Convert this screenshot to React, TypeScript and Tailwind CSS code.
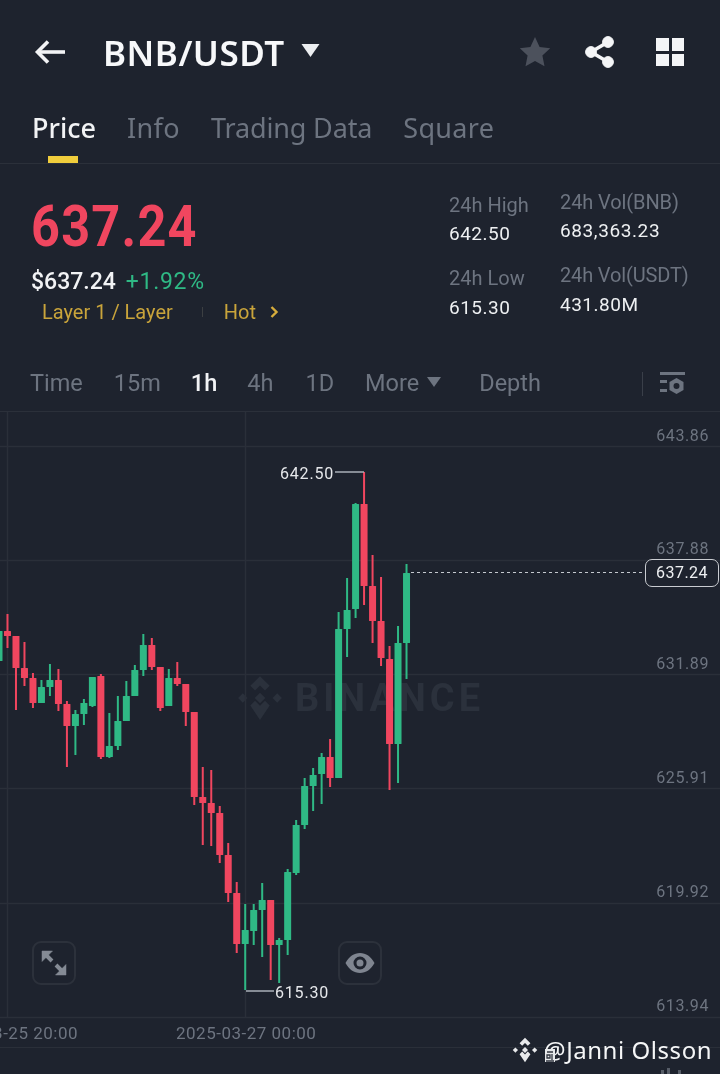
const UP = "#2fb985";
const DOWN = "#f0465f";
// x-index, colour, wick top, body top, body bottom, wick bottom
const C: [number, number, number, number, number, number][] = [
  [0,1,626,631,661,661],[1,0,614,631,636,648],[2,0,636,636,668,710],[3,0,642,668,678,686],[4,0,673,678,703,708],
  [5,1,680,687,703,703],[6,1,664,680,687,696],[7,0,669,680,704,711],[8,0,701,704,726,767],[9,1,710,714,726,755],
  [10,1,699,703,714,725],[11,1,677,677,706,707],[12,0,674,676,757,759],[13,1,713,746,757,758],[14,1,696,721,746,750],
  [15,1,681,696,721,721],[16,1,665,670,696,696],[17,1,634,645,670,676],[18,0,638,645,667,670],[19,0,667,667,708,711],
  [20,1,669,678,706,706],[21,0,662,678,684,686],[22,0,684,684,712,726],[23,0,712,712,797,805],[24,0,767,797,803,845],
  [25,0,770,803,813,846],[26,0,806,813,855,863],[27,0,843,855,893,902],[28,0,882,893,944,953],[29,1,904,930,944,990],
  [30,1,904,910,931,945],[31,1,883,900,910,957],[32,0,900,900,945,980],[33,1,938,940,945,983],[34,1,869,872,940,955],
  [35,1,820,825,873,875],[36,1,778,786,825,829],[37,1,768,775,786,811],[38,1,753,757,774,804],[39,0,739,757,778,787],
  [40,1,612,629,778,778],[41,1,578,610,629,657],[42,1,503,504,609,618],[43,0,472,504,586,605],[44,0,555,586,621,643],
  [45,0,577,621,658,666],[46,0,646,659,744,790],[47,1,626,643,744,783],[48,1,564,573,643,679],
];
const GRID = [446, 560, 674, 788, 903, 1017];

function Chart() {
  return (
    <svg className="absolute inset-0 block" width="720" height="636" viewBox="0 412 720 636">
      {GRID.map((y) => (
        <line key={y} x1="0" x2="720" y1={y + 0.5} y2={y + 0.5} stroke="#2a2f39" strokeWidth="1.5" />
      ))}
      <line x1="7.5" x2="7.5" y1="412" y2="1017" stroke="#2a2f39" strokeWidth="1.5" />
      <line x1="245.5" x2="245.5" y1="412" y2="1017" stroke="#2a2f39" strokeWidth="1.5" />
      {C.map(([i, up, wt, bt, bb, wb]) => {
        const x = -1 + i * 8.49;
        const col = up ? UP : DOWN;
        return (
          <g key={i} fill={col}>
            <rect x={x - 1} y={wt} width="2" height={wb - wt} />
            <rect x={x - 3.5} y={bt} width="7" height={Math.max(bb - bt, 2)} rx="0.5" />
          </g>
        );
      })}
      <path d="M335 472H364" stroke="#aab0b8" strokeWidth="1.5" fill="none" />
      <path d="M246 991H274" stroke="#aab0b8" strokeWidth="1.5" fill="none" />
      <line x1="411" x2="645" y1="572.5" y2="572.5" stroke="#c5c9cf" strokeWidth="1" strokeDasharray="3 3" />
    </svg>
  );
}

function BinanceMark({ size, color }: { size: number; color: string }) {
  return (
    <svg width={size} height={size} viewBox="0 0 32 32" fill={color}>
      <path d="M16 2l6.200 6.200-3 3L16 8l-3.200 3.200-3-3z" />
      <path d="M2 16l3-3 3 3-3 3z" />
      <path d="M24 16l3-3 3 3-3 3z" />
      <path d="M16 12.600L19.400 16 16 19.400 12.600 16z" />
      <path d="M9.800 20.800l3-3L16 21l3.200-3.200 3 3L16 30z" />
    </svg>
  );
}

export default function App() {
  return (
    <div className="w-[720px] h-[1074px] overflow-hidden bg-[#1e232e] font-['Roboto',sans-serif] text-white flex flex-col blur-[0.4px]">
      {/* header */}
      <div className="h-[104px] flex items-center pl-[34px] pr-[36px] shrink-0">
        <svg width="32" height="26" viewBox="0 0 32 26" fill="none" stroke="#f2f3f5" strokeWidth="3.6">
          <path d="M31 13H4" />
          <path d="M14 2.500L3.500 13 14 23.500" />
        </svg>
        <span className="ml-[37px] text-[35px] leading-none font-semibold tracking-[0.5px] font-['Noto_Sans',sans-serif] text-[#f7f8fa]">BNB/USDT</span>
        <svg className="ml-[16px] -mt-[3px]" width="19" height="15" viewBox="0 0 19 15" fill="#eceef1">
          <path d="M0.500 1H18.500L9.500 14z" />
        </svg>
        <div className="ml-auto flex items-center">
          <svg width="32" height="32" viewBox="0 0 32 32" fill="#4c515c">
            <path d="M16 1l4.600 9.900 10.600 1.300-7.800 7.300 2.100 10.700L16 25l-9.500 5.200 2.100-10.700-7.800-7.300 10.600-1.300z" />
          </svg>
          <svg className="ml-[33px]" width="32" height="32" viewBox="0 0 32 32" fill="#f4f5f7" stroke="#f4f5f7">
            <circle cx="7" cy="16" r="5.400" />
            <circle cx="24" cy="6" r="5.400" />
            <circle cx="24" cy="26" r="5.400" />
            <path d="M7 16L24 6M7 16l17 10" strokeWidth="3.600" />
          </svg>
          <div className="ml-[40px] grid grid-cols-2 gap-[3px] w-[28px]">
            <div className="h-[13px] bg-[#f4f5f7]" />
            <div className="h-[13px] bg-[#f4f5f7]" />
            <div className="h-[12px] bg-[#f4f5f7]" />
            <div className="h-[12px] bg-[#f4f5f7]" />
          </div>
        </div>
      </div>

      {/* tabs */}
      <div className="h-[60px] shrink-0 border-b border-[#2b303a] flex pl-[32px] text-[27px] leading-[47px] font-['Noto_Sans',sans-serif] text-[#6d7480] relative">
        <div className="relative text-[#f2f3f5] font-medium">
          Price
          <div className="absolute left-[16px] top-[52px] w-[30px] h-[7px] bg-[#f0cd3c]" />
        </div>
        <div className="ml-[31px] tracking-[0.4px]">Info</div>
        <div className="ml-[31px] tracking-[-0.15px]">Trading Data</div>
        <div className="ml-[31px] tracking-[0.3px]">Square</div>
      </div>

      {/* stats */}
      <div className="h-[186px] shrink-0 flex relative">
        <div className="w-[449px] pl-[31px]">
          <div className="mt-[31px] text-[57px] leading-[64px] font-bold tracking-[1.4px] text-[#f0465f] scale-x-[0.885] origin-left">637.24</div>
          <div className="mt-[8px] flex items-center gap-[10px] text-[23px] leading-[30px]">
            <span className="font-medium text-[#f2f3f5]">$637.24</span>
            <span className="text-[#2fb985] tracking-[0.7px]">+1.92%</span>
          </div>
          <div className="mt-[2px] ml-[11px] flex items-center text-[20px] leading-[26px] text-[#c9a43b]">
            <span>Layer 1 / Layer</span>
            <span className="ml-[29px] w-px h-[10px] bg-[#3c3f42]" />
            <span className="ml-[21px]">Hot</span>
            <svg className="ml-[14px]" width="9" height="14" viewBox="0 0 9 14" fill="none" stroke="#d6ac3c" strokeWidth="2.400">
              <path d="M1.500 2l5 5-5 5" />
            </svg>
          </div>
        </div>
        <div className="w-[111px] pt-[27px]">
          <div className="text-[20px] leading-[28px] text-[#6d7480]">24h High</div>
          <div className="text-[19px] leading-[28px] tracking-[0.5px] text-[#eef0f2] mt-[1px]">642.50</div>
          <div className="mt-[16px] text-[20px] leading-[28px] text-[#6d7480]">24h Low</div>
          <div className="text-[19px] leading-[30px] tracking-[0.5px] text-[#eef0f2] mt-[1px]">615.30</div>
        </div>
        <div className="pt-[24px]">
          <div className="text-[20px] leading-[28px] tracking-[-0.1px] text-[#6d7480]">24h Vol(BNB)</div>
          <div className="text-[19px] leading-[28px] tracking-[0.6px] text-[#eef0f2] mt-[1px]">683,363.23</div>
          <div className="mt-[16px] text-[20px] leading-[28px] tracking-[-0.15px] text-[#6d7480]">24h Vol(USDT)</div>
          <div className="text-[19px] leading-[30px] tracking-[0.5px] text-[#eef0f2] mt-[1px]">431.80M</div>
        </div>
      </div>

      {/* timeframe row */}
      <div className="h-[62px] shrink-0 border-b border-[#2b303a] flex items-center pt-[6px] pl-[30px] pr-[35px] text-[23.5px] text-[#6d7480]">
        <span>Time</span>
        <span className="ml-[31px]">15m</span>
        <span className="ml-[30px] text-[#f2f3f5] font-medium">1h</span>
        <span className="ml-[30px]">4h</span>
        <span className="ml-[32px]">1D</span>
        <span className="ml-[31px]">More</span>
        <svg className="ml-[8px] -mt-[4px]" width="14" height="10" viewBox="0 0 14 10" fill="#6d7480">
          <path d="M0 0H14L7 10z" />
        </svg>
        <span className="ml-[38px]">Depth</span>
        <div className="ml-auto w-px h-[24px] bg-[#3a3f49]" />
        <svg className="ml-[17px]" width="25" height="24" viewBox="0 0 25 24" fill="#6d7480">
          <rect x="0" y="0" width="25" height="3" />
          <rect x="0" y="8" width="7" height="3" />
          <rect x="0" y="17" width="7" height="3" />
          <path fillRule="evenodd" d="M16.500 6l7 4v8l-7 4-7-4v-8zM16.500 11a3 3 0 100 6 3 3 0 000-6z" />
        </svg>
      </div>

      {/* chart */}
      <div className="relative h-[636px] shrink-0 border-b border-[#2a2f39]">
        <div className="absolute left-[235px] top-[261px] flex items-center">
          <BinanceMark size={50} color="#2b313c" />
          <span className="ml-[10px] text-[38px] leading-none font-bold tracking-[4px] text-[#2b313c]">BINANCE</span>
        </div>
        <Chart />

        {[
          ["643.86", 16],
          ["637.88", 129],
          ["631.89", 244],
          ["625.91", 358],
          ["619.92", 472],
          ["613.94", 586],
        ].map(([t, y]) => (
          <div key={t} className="absolute right-[11px] text-[16px] leading-[20px] tracking-[0.6px] text-[#6d7480]" style={{ top: Number(y) - 2 }}>
            {t}
          </div>
        ))}

        <div className="absolute left-[645px] top-[147px] w-[74px] h-[28px] rounded-[7px] border border-[#c9ccd1] bg-[#1e232e] flex items-center justify-center text-[16px] tracking-[0.5px] text-[#eef0f2]">
          637.24
        </div>
        <div className="absolute left-[280px] top-[52px] text-[16px] leading-[20px] tracking-[0.8px] text-[#e6e8eb]">642.50</div>
        <div className="absolute left-[275px] top-[571px] text-[16px] leading-[20px] tracking-[0.8px] text-[#e6e8eb]">615.30</div>

        <div className="absolute left-[32px] top-[529px] w-[44px] h-[44px] rounded-[9px] border-2 border-[#2c313b] flex items-center justify-center">
          <svg width="26" height="26" viewBox="0 0 26 26" fill="#858b95" stroke="#858b95" strokeWidth="0.500">
            <path d="M1 1h10.500L1 11.500z" />
            <path d="M25 25H14.500L25 14.500z" />
            <path d="M5 5l6 6M15 15l6 6" strokeWidth="4" />
          </svg>
        </div>
        <div className="absolute left-[338px] top-[529px] w-[44px] h-[44px] rounded-[9px] border-2 border-[#2c313b] flex items-center justify-center">
          <svg width="30" height="22" viewBox="0 0 30 22" fill="#7f8590">
            <path fillRule="evenodd" d="M0.500 11C4 4.500 9 1 15 1s11 3.500 14.500 10C26 17.500 21 21 15 21S4 17.500 0.500 11zM15 4.500a6.500 6.500 0 100 13 6.500 6.500 0 000-13zM15 7.500a3.500 3.500 0 110 7 3.500 3.500 0 010-7z" />
          </svg>
        </div>
      </div>

      {/* x axis */}
      <div className="relative flex-1 text-[17px] leading-[22px] tracking-[0.5px] text-[#6d7480]">
        <div className="absolute left-0 right-0 top-[-31px] h-[31px]">
          <span className="absolute left-0 top-[5px] w-[78px] overflow-hidden whitespace-nowrap flex justify-end">2025-03-25 20:00</span>
          <span className="absolute left-[176px] top-[5px] whitespace-nowrap">2025-03-27 00:00</span>
        </div>
        <div className="absolute left-[511px] top-[-13px] flex items-center">
          <BinanceMark size={28} color="#e8e9eb" />
          <div className="relative ml-[5px] text-[24px] leading-[30px] tracking-[0.55px] text-[#f5f6f7] font-['Noto_Sans',sans-serif]">
            @Janni Olsson
            <svg className="absolute left-[0px] top-[13px]" width="12" height="15" viewBox="0 0 12 15">
              <rect x="1" y="1" width="10" height="13" fill="#e6e8ea" />
              <path d="M3 4h6M3 7h3v3H3zM8 6v6M2 13h8" stroke="#30353f" strokeWidth="1.300" fill="none" />
            </svg>
          </div>
        </div>
        <svg className="absolute left-[660px] top-[19px]" width="24" height="8" viewBox="0 0 24 8" fill="#565c67">
          <rect x="1" y="3" width="3" height="5" />
          <rect x="7" y="1" width="3" height="7" />
          <rect x="18" y="3" width="3" height="5" />
        </svg>
      </div>
    </div>
  );
}
